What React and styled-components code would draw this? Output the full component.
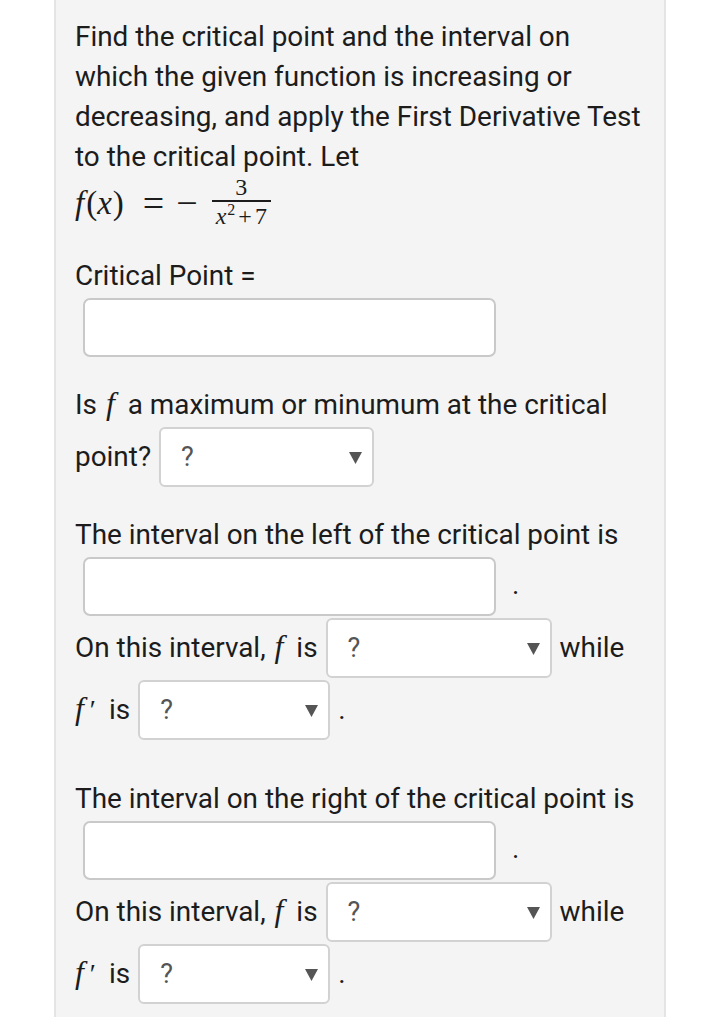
import React from 'react';
import styled, { createGlobalStyle } from 'styled-components';

const colors = {
  panel: '#f4f4f4',
  panelBorder: '#e4e4e4',
  text: '#1c1c1c',
  field: '#c9c9c9',
  muted: '#555555',
};

const GlobalStyle = createGlobalStyle`
  html, body {
    margin: 0;
    padding: 0;
    background: #ffffff;
  }
  body {
    font-family: Roboto, "Liberation Sans", sans-serif;
    color: ${colors.text};
  }
`;

const StyledPage = styled.div`
  display: flex;
  justify-content: flex-start;
  padding-left: 54px;
`;

const StyledPanel = styled.div`
  width: 612px;
  min-height: 1017px;
  box-sizing: border-box;
  padding: 17px 10px 0 19px;
  background-color: ${colors.panel};
  border-left: 2px solid ${colors.panelBorder};
  border-right: 2px solid ${colors.panelBorder};
`;

const StyledText = styled.div`
  font-size: 27.9px;
  line-height: 40px;
  white-space: nowrap;
  margin-top: ${({ $gap }) => $gap || 0}px;
`;

const StyledMath = styled.span`
  font-family: "Liberation Serif", "DejaVu Serif", serif;
  font-style: ${({ $upright }) => ($upright ? 'normal' : 'italic')};
  font-size: ${({ $size }) => $size || 33}px;
  line-height: ${({ $flat }) => ($flat ? 0 : 'normal')};
  margin-left: ${({ $left }) => $left || 0}px;
  margin-right: ${({ $right }) => $right || 0}px;
`;

const StyledFormula = styled.div`
  display: flex;
  align-items: center;
  height: 52px;
  font-family: "Liberation Serif", "DejaVu Serif", serif;
`;

const StyledFraction = styled.span`
  display: inline-flex;
  flex-direction: column;
  align-items: center;
  font-size: 24px;
  line-height: 21px;
  margin-top: -2px;
`;

const StyledNumerator = styled.span`
  padding: 0 4px 2px;
  border-bottom: 2px solid ${colors.text};
  align-self: stretch;
  text-align: center;
`;

const StyledDenominator = styled.span`
  padding: 4px 4px 0;

  sup {
    font-size: 16px;
    vertical-align: 9px;
    line-height: 0;
    margin-left: 1px;
  }
  i {
    font-style: italic;
  }
  b {
    font-weight: normal;
    margin: 0 3px;
  }
`;

const StyledRow = styled.div`
  display: flex;
  align-items: center;
  gap: ${({ $gap }) => $gap ?? 8}px;
  margin-top: ${({ $top }) => $top ?? 2}px;
  font-size: 27.9px;
  line-height: 40px;
  white-space: nowrap;
`;

const StyledInput = styled.input`
  width: 413px;
  height: 59px;
  box-sizing: border-box;
  margin-left: 8px;
  border: 2px solid ${colors.field};
  border-radius: 7px;
  background-color: #ffffff;
  font-size: 22px;
  outline: none;
`;

const StyledDot = styled.span`
  margin-left: 16px;
  margin-top: ${({ $offset }) => $offset || 0}px;
`;

const StyledSelect = styled.div`
  display: flex;
  align-items: center;
  justify-content: space-between;
  width: ${({ $width }) => $width}px;
  height: 60px;
  box-sizing: border-box;
  padding: 0 10px 0 20px;
  border: 2px solid #d2d2d2;
  border-radius: 6px;
  background-color: #ffffff;
  color: ${colors.muted};
  font-size: 27px;
`;

const StyledArrow = styled.svg`
  width: 13px;
  height: 12px;
  margin-top: 2px;
`;

const Select = ({ width }) => (
  <StyledSelect $width={width}>
    <span>?</span>
    <StyledArrow viewBox="0 0 13 12">
      <path d="M0 0 H13 L6.5 12 Z" fill={colors.muted} />
    </StyledArrow>
  </StyledSelect>
);

const F = ({ prime }) =>
  prime ? (
    <StyledMath $flat $size={32} $right={8}>
      f<StyledMath $flat $size={28} $left={4}>′</StyledMath>
    </StyledMath>
  ) : (
    <StyledMath $flat $size={32} $left={2} $right={6}>
      f
    </StyledMath>
  );

const IntervalBlock = ({ side, gap }) => (
  <>
    <StyledText $gap={gap}>
      The interval on the {side} of the critical point is
    </StyledText>
    <StyledRow $top={2} $gap={0}>
      <StyledInput type="text" />
      <StyledDot $offset={-4}>.</StyledDot>
    </StyledRow>
    <StyledRow $top={2}>
      <span>
        On this interval, <F /> is
      </span>
      <Select width={226} />
      <span>while</span>
    </StyledRow>
    <StyledRow $top={2}>
      <span>
        <F prime /> is
      </span>
      <Select width={192} />
      <span>.</span>
    </StyledRow>
  </>
);

export default function App() {
  return (
    <>
      <GlobalStyle />
      <StyledPage>
        <StyledPanel>
          <StyledText>
            Find the critical point and the interval on
            <br />
            which the given function is increasing or
            <br />
            decreasing, and apply the First Derivative Test
            <br />
            to the critical point. Let
          </StyledText>
          <StyledFormula>
            <StyledMath>f</StyledMath>
            <StyledMath $upright $left={2}>(</StyledMath>
            <StyledMath>x</StyledMath>
            <StyledMath $upright $left={1}>)</StyledMath>
            <StyledMath $upright $size={38} $left={19} $right={12}>=</StyledMath>
            <StyledMath $upright $size={38} $right={14}>−</StyledMath>
            <StyledFraction>
              <StyledNumerator>3</StyledNumerator>
              <StyledDenominator>
                <i>x</i>
                <sup>2</sup>
                <b>+</b>7
              </StyledDenominator>
            </StyledFraction>
          </StyledFormula>
          <StyledText $gap={27}>Critical Point =</StyledText>
          <StyledRow $top={2}>
            <StyledInput type="text" />
          </StyledRow>
          <StyledText $gap={28}>
            Is <F /> a maximum or minumum at the critical
          </StyledText>
          <StyledRow $top={2}>
            <span>point?</span>
            <Select width={215} />
          </StyledRow>
          <IntervalBlock side="left" gap={28} />
          <IntervalBlock side="right" gap={39} />
        </StyledPanel>
      </StyledPage>
    </>
  );
}
